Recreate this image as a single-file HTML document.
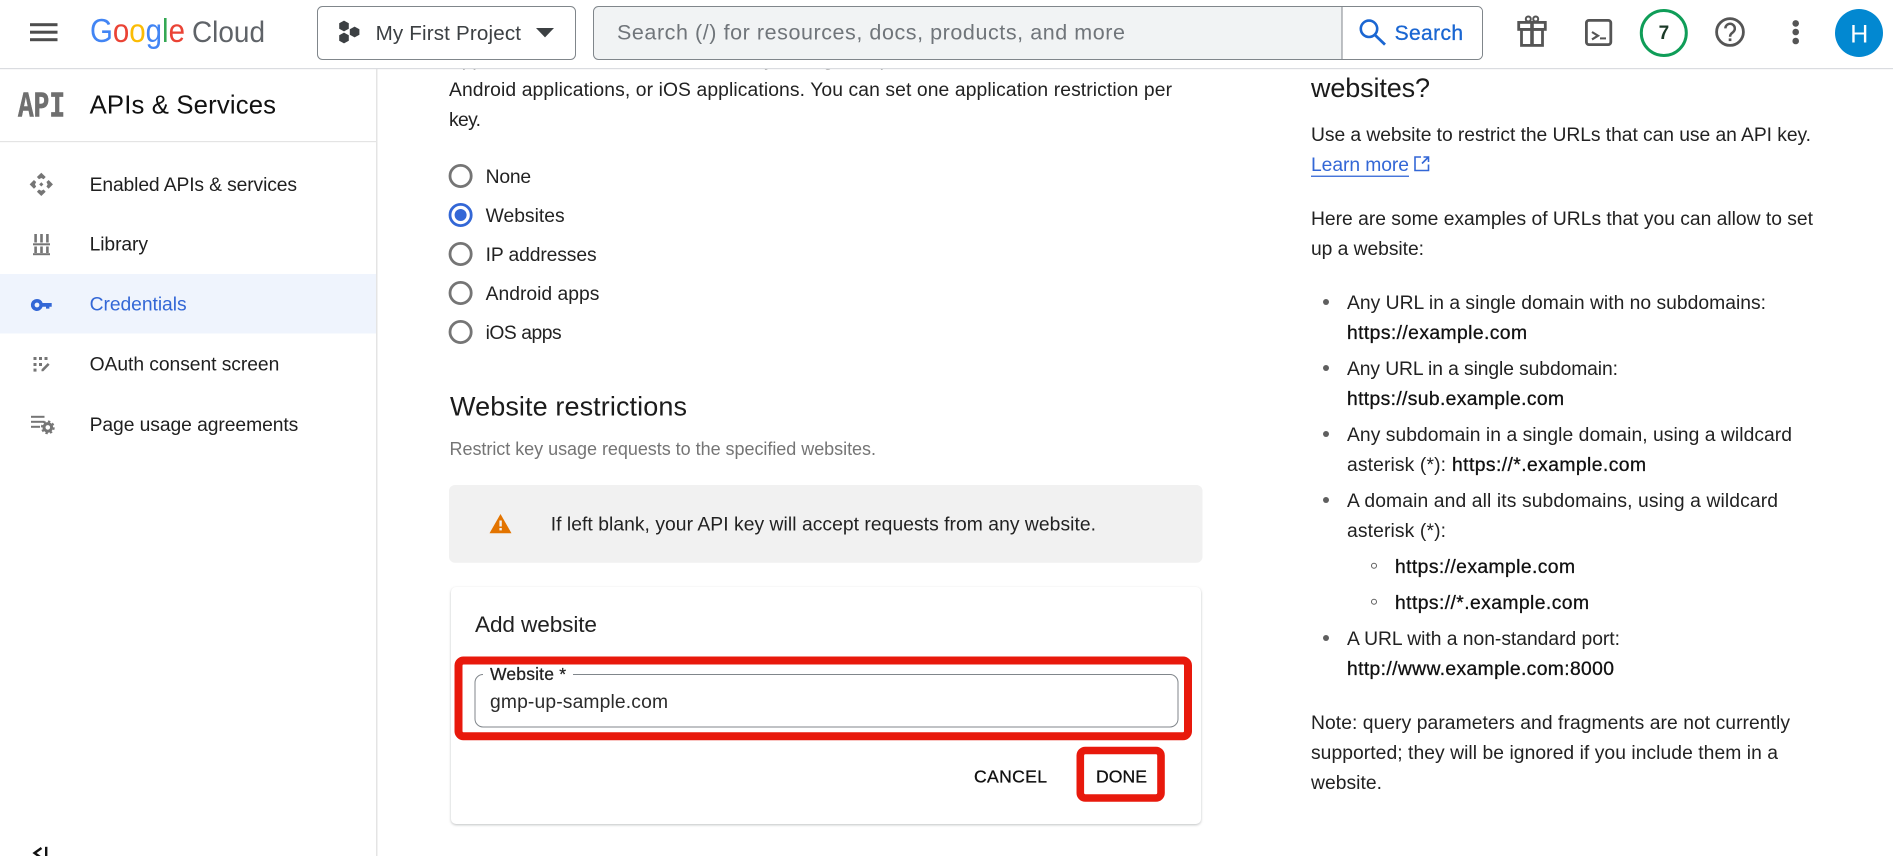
<!DOCTYPE html>
<html lang="en">
<head>
<meta charset="utf-8">
<title>APIs &amp; Services - Credentials</title>
<style>
html,body{margin:0;padding:0;width:1893px;height:856px;overflow:hidden;background:#fff}
svg{display:block;position:absolute;left:0;top:0}
text{font-family:"Liberation Sans",Arial,sans-serif;fill:#202124;white-space:pre}
.s{font-size:19.3px;fill:#1f1f1f}
.n{font-size:19.3px;fill:#222}
.b{font-size:19.3px;fill:#111;stroke:#111;stroke-width:.3px}
.h{font-size:27px;fill:#1b1b1b}
</style>
</head>
<body>
<svg width="1893" height="856" viewBox="0 0 1893 856" xmlns="http://www.w3.org/2000/svg">
<rect width="1893" height="856" fill="#fff"/>

<!-- main column -->
<g>
<text class="n" x="449" y="65.5" textLength="690">Application restrictions limit an API key's usage to specific websites, IP addresses,</text>
<text class="n" x="449" y="96" textLength="723">Android applications, or iOS applications. You can set one application restriction per</text>
<text class="n" x="449" y="126" textLength="32">key.</text>

<g fill="none" stroke="#757575" stroke-width="2.8">
<circle cx="460.6" cy="176" r="10.6"/>
<circle cx="460.6" cy="254" r="10.6"/>
<circle cx="460.6" cy="293" r="10.6"/>
<circle cx="460.6" cy="332" r="10.6"/>
</g>
<circle cx="460.6" cy="215" r="10.6" fill="none" stroke="#3367d6" stroke-width="2.8"/>
<circle cx="460.6" cy="215" r="6" fill="#3367d6"/>

<text class="n" x="485.6" y="183" textLength="45.5">None</text>
<text class="n" x="485.6" y="222" textLength="79">Websites</text>
<text class="n" x="485.6" y="261" textLength="111">IP addresses</text>
<text class="n" x="485.6" y="300" textLength="113.8">Android apps</text>
<text class="n" x="485.6" y="339" textLength="76">iOS apps</text>

<text class="h" x="450" y="415.7" textLength="237">Website restrictions</text>
<text x="449.5" y="455" font-size="18" textLength="426.5" style="fill:#757575">Restrict key usage requests to the specified websites.</text>

<rect x="449" y="485" width="753.5" height="77.7" rx="6" fill="#f1f1f1"/>
<path d="M500.5 514 L511.5 533.3 H489.5 Z" fill="#e37400"/>
<rect x="499.4" y="520.5" width="2.4" height="6" fill="#f1f1f1"/>
<rect x="499.4" y="528" width="2.4" height="2.4" fill="#f1f1f1"/>
<text class="n" x="550.7" y="530.7" textLength="545.3">If left blank, your API key will accept requests from any website.</text>

<rect x="451" y="587" width="750" height="237" rx="5" fill="#fff" style="filter:drop-shadow(0 1px 1.2px rgba(60,64,67,.32))"/>
<text x="475" y="632" font-size="22.6" textLength="122" style="fill:#222">Add website</text>

<path d="M573 674.5 H1170 a8 8 0 0 1 8 8 V719 a8 8 0 0 1 -8 8 H483 a8 8 0 0 1 -8 -8 V682.5 a8 8 0 0 1 8 -8" fill="none" stroke="#80868b" stroke-width="1"/>
<text x="490" y="680" font-size="17.5" textLength="76" style="fill:#222;stroke:#222;stroke-width:.25px">Website *</text>
<text class="n" x="490" y="708" textLength="178" style="fill:#2b2b2b">gmp-up-sample.com</text>

<text x="974" y="782.7" font-size="17.6" textLength="73" style="fill:#111;stroke:#111;stroke-width:.3px">CANCEL</text>
<text x="1096" y="782.7" font-size="17.6" textLength="51" style="fill:#111;stroke:#111;stroke-width:.3px">DONE</text>

<rect x="458.5" y="660.5" width="729.5" height="75.7" rx="5" fill="none" stroke="#e8190c" stroke-width="8"/>
<rect x="1080.3" y="750.5" width="80.7" height="47.5" rx="5" fill="none" stroke="#e8190c" stroke-width="7.6"/>
</g>

<!-- right help panel -->
<g>
<text class="h" x="1311" y="97" textLength="119">websites?</text>
<text class="n" x="1311" y="141" textLength="500">Use a website to restrict the URLs that can use an API key.</text>
<text class="n" x="1311" y="171" textLength="98" style="fill:#3367d6">Learn more</text>
<rect x="1311" y="175.6" width="98" height="1.3" fill="#3367d6"/>
<path d="M1421 157 H1415 V170.5 H1428.5 V164.5 M1422 163.5 L1428.5 157 M1423.5 157 H1428.5 V162" fill="none" stroke="#3367d6" stroke-width="1.6"/>
<text class="n" x="1311" y="225" textLength="502">Here are some examples of URLs that you can allow to set</text>
<text class="n" x="1311" y="255" textLength="113">up a website:</text>

<g fill="#5f5f5f">
<circle cx="1326" cy="302" r="3"/>
<circle cx="1326" cy="368" r="3"/>
<circle cx="1326" cy="434" r="3"/>
<circle cx="1326" cy="500" r="3"/>
<circle cx="1326" cy="638" r="3"/>
</g>
<text class="n" x="1347" y="309" textLength="419">Any URL in a single domain with no subdomains:</text>
<text class="b" x="1347" y="339" textLength="180">https://example.com</text>
<text class="n" x="1347" y="375" textLength="271">Any URL in a single subdomain:</text>
<text class="b" x="1347" y="405" textLength="217">https://sub.example.com</text>
<text class="n" x="1347" y="441" textLength="445">Any subdomain in a single domain, using a wildcard</text>
<text class="n" x="1347" y="471" textLength="99">asterisk (*):</text>
<text class="b" x="1452" y="471" textLength="194">https://*.example.com</text>
<text class="n" x="1347" y="507" textLength="431">A domain and all its subdomains, using a wildcard</text>
<text class="n" x="1347" y="537" textLength="99">asterisk (*):</text>
<circle cx="1374" cy="565.7" r="2.5" fill="none" stroke="#5f5f5f" stroke-width="1"/>
<circle cx="1374" cy="601.7" r="2.5" fill="none" stroke="#5f5f5f" stroke-width="1"/>
<text class="b" x="1395" y="573" textLength="180">https://example.com</text>
<text class="b" x="1395" y="609" textLength="194">https://*.example.com</text>
<text class="n" x="1347" y="645" textLength="273">A URL with a non-standard port:</text>
<text class="b" x="1347" y="675" textLength="267">http://www.example.com:8000</text>
<text class="n" x="1311" y="729" textLength="479">Note: query parameters and fragments are not currently</text>
<text class="n" x="1311" y="759" textLength="467">supported; they will be ignored if you include them in a</text>
<text class="n" x="1311" y="789" textLength="71">website.</text>
</g>

<!-- sidebar -->
<g>
<rect x="0" y="69" width="376" height="787" fill="#fff"/>
<rect x="376" y="69" width="1.5" height="787" fill="#e4e4e4"/>
<text x="18" y="116.7" font-size="36" textLength="47" lengthAdjust="spacingAndGlyphs" font-weight="700" style="font-family:'Liberation Mono',monospace;fill:#6f6f6f;stroke:#6f6f6f;stroke-width:.6px">API</text>
<text x="89.6" y="113.3" font-size="25.7" textLength="186.4" style="fill:#111">APIs &amp; Services</text>
<rect x="0" y="141" width="376" height="1.2" fill="#e4e4e4"/>

<rect x="0" y="274" width="376" height="59.5" fill="#eff4fd"/>

<g fill="#757575">
<path id="arm" d="M41.3 172.7 L45.7 177 L43.6 179.2 L41.3 178 L39 179.2 L36.9 177z"/>
<path d="M41.3 172.7 L45.7 177 L43.6 179.2 L41.3 178 L39 179.2 L36.9 177z" transform="rotate(90 41.3 184.35)"/>
<path d="M41.3 172.7 L45.7 177 L43.6 179.2 L41.3 178 L39 179.2 L36.9 177z" transform="rotate(180 41.3 184.35)"/>
<path d="M41.3 172.7 L45.7 177 L43.6 179.2 L41.3 178 L39 179.2 L36.9 177z" transform="rotate(270 41.3 184.35)"/>
<rect x="39.8" y="182.85" width="3" height="3" transform="rotate(45 41.3 184.35)"/>
</g>

<g fill="#757575">
<rect x="34.3" y="234" width="2.6" height="8.5"/><rect x="40.2" y="234" width="2.6" height="8.5"/><rect x="46.1" y="234" width="2.6" height="8.5"/>
<rect x="33" y="243.3" width="17" height="2"/>
<rect x="34.3" y="246.5" width="2.6" height="6.5"/><rect x="40.2" y="246.5" width="2.6" height="6.5"/><rect x="46.1" y="246.5" width="2.6" height="6.5"/>
<rect x="33" y="253.2" width="17" height="2"/>
</g>

<path fill-rule="evenodd" d="M37 299 a6 6 0 0 1 5.6 4 H51.7 V306.8 H49.4 V308.6 H46 V306.8 H42.6 a6 6 0 1 1 -5.6 -7.8z M37 302.6 a2.4 2.4 0 1 0 0 4.8 a2.4 2.4 0 1 0 0 -4.8z" fill="#3367d6"/>

<g fill="#757575">
<rect x="33.5" y="357" width="3" height="3"/><rect x="39" y="357" width="3" height="3"/><rect x="44.5" y="357" width="3" height="3"/>
<rect x="33.5" y="363" width="3" height="3"/><rect x="39" y="363" width="3" height="3"/>
<rect x="33.5" y="368.6" width="3" height="3"/>
<path d="M41.5 369.4 L47.8 363 L49.6 364.8 L43.3 371.2 H41.5z"/>
</g>

<g fill="#757575">
<rect x="31" y="415.8" width="13.5" height="2"/>
<rect x="31" y="420.8" width="13.5" height="2"/>
<rect x="31" y="425.8" width="9" height="2"/>
<circle cx="47.8" cy="427.4" r="3.8" fill="none" stroke="#757575" stroke-width="3"/>
<circle cx="47.8" cy="427.4" r="6" fill="none" stroke="#757575" stroke-width="1.8" stroke-dasharray="2.4 2.3"/>
</g>

<text class="s" x="89.6" y="191" textLength="207.4">Enabled APIs &amp; services</text>
<text class="s" x="89.6" y="250.7" textLength="58.4">Library</text>
<text class="s" x="89.6" y="310.7" textLength="97" style="fill:#3367d6">Credentials</text>
<text class="s" x="89.6" y="370.7" textLength="189.7">OAuth consent screen</text>
<text class="s" x="89.6" y="431" textLength="208.7">Page usage agreements</text>

<path d="M41.5 848 L34.5 853 L41.5 858" fill="none" stroke="#111" stroke-width="2.4"/>
<rect x="45" y="846.8" width="2.4" height="10" fill="#111"/>
</g>

<!-- header -->
<g>
<rect x="0" y="0" width="1893" height="68" fill="#fff"/>
<rect x="0" y="68" width="1893" height="1.2" fill="#dadce0"/>

<g fill="#4d4d4d">
<rect x="30" y="23.2" width="27.5" height="3"/>
<rect x="30" y="30.7" width="27.5" height="3"/>
<rect x="30" y="38.2" width="27.5" height="3"/>
</g>

<text x="90" y="42" font-size="33" textLength="95" lengthAdjust="spacingAndGlyphs"><tspan style="fill:#4285f4">G</tspan><tspan style="fill:#ea4335">o</tspan><tspan style="fill:#fbbc04">o</tspan><tspan style="fill:#4285f4">g</tspan><tspan style="fill:#34a853">l</tspan><tspan style="fill:#ea4335">e</tspan></text>
<text x="192" y="42" font-size="29.5" textLength="73" lengthAdjust="spacingAndGlyphs" style="fill:#5f6368">Cloud</text>

<rect x="317.5" y="6.5" width="258" height="53" rx="5" fill="#fff" stroke="#80868b" stroke-width="1"/>
<g fill="#3c4043">
<polygon points="344,20.6 348.8,23.3 348.8,28.7 344,31.4 339.2,28.7 339.2,23.3"/>
<polygon points="354.6,26.6 359.4,29.3 359.4,34.7 354.6,37.4 349.8,34.7 349.8,29.3"/>
<polygon points="344,32.6 348.8,35.3 348.8,40.7 344,43.4 339.2,40.7 339.2,35.3"/>
</g>
<text x="375.6" y="40" font-size="20.6" textLength="145.4" style="fill:#3c4043">My First Project</text>
<path d="M536 28 H554 L545 37.4z" fill="#3c4043"/>

<rect x="593.5" y="6.5" width="889" height="53" rx="5" fill="#f1f3f4" stroke="#80868b" stroke-width="1"/>
<path d="M1342 7 H1477.5 a4.5 4.5 0 0 1 4.5 4.5 V54.5 a4.5 4.5 0 0 1 -4.5 4.5 H1342z" fill="#fff"/>
<rect x="1341.5" y="7" width="1" height="52" fill="#80868b"/>
<text x="617" y="39.5" font-size="21.5" textLength="508" style="fill:#70757a">Search (/) for resources, docs, products, and more</text>
<circle cx="1369" cy="28.8" r="8.2" fill="none" stroke="#1a66d2" stroke-width="2.6"/>
<path d="M1375 35 L1385 44.6" fill="none" stroke="#1a66d2" stroke-width="2.8"/>
<text x="1394.6" y="40" font-size="21" textLength="68.4" style="fill:#1a66d2;stroke:#1a66d2;stroke-width:.3px">Search</text>

<g fill="none" stroke="#555" stroke-width="2.8">
<rect x="1518.7" y="22.4" width="26.6" height="7"/>
<rect x="1521.5" y="29.4" width="21" height="16"/>
<path d="M1532 22 V45.5" stroke-width="3.6"/>
<circle cx="1528.3" cy="19" r="2.5" stroke-width="2"/>
<circle cx="1535.7" cy="19" r="2.5" stroke-width="2"/>
</g>

<rect x="1586.4" y="20.4" width="24.4" height="24.2" rx="2.5" fill="none" stroke="#555" stroke-width="2.8"/>
<path d="M1592 32 L1598 35.7 L1592 39.4" fill="none" stroke="#555" stroke-width="2.2"/>
<rect x="1600" y="37.4" width="6" height="2" fill="#555"/>

<circle cx="1663.8" cy="33" r="22.5" fill="#fff" stroke="#0f9d58" stroke-width="3"/>
<text x="1658.6" y="39.2" font-size="19" font-weight="700" style="fill:#1c3a28">7</text>

<circle cx="1730" cy="32" r="13.4" fill="none" stroke="#555" stroke-width="2.8"/>
<path d="M1725.4 28.4 a4.7 4.7 0 1 1 7.7 3.7 c-1.9 1.5 -3 2.4 -3 4.6" fill="none" stroke="#555" stroke-width="2.5"/>
<rect x="1728.7" y="38.4" width="2.7" height="2.7" fill="#555"/>

<g fill="#555">
<circle cx="1795.7" cy="23.4" r="3.3"/>
<circle cx="1795.7" cy="32" r="3.3"/>
<circle cx="1795.7" cy="41" r="3.3"/>
</g>

<circle cx="1859" cy="33" r="24" fill="#0288d1"/>
<text x="1850.2" y="42.4" font-size="25" style="fill:#fff">H</text>
</g>
</svg>
</body>
</html>
